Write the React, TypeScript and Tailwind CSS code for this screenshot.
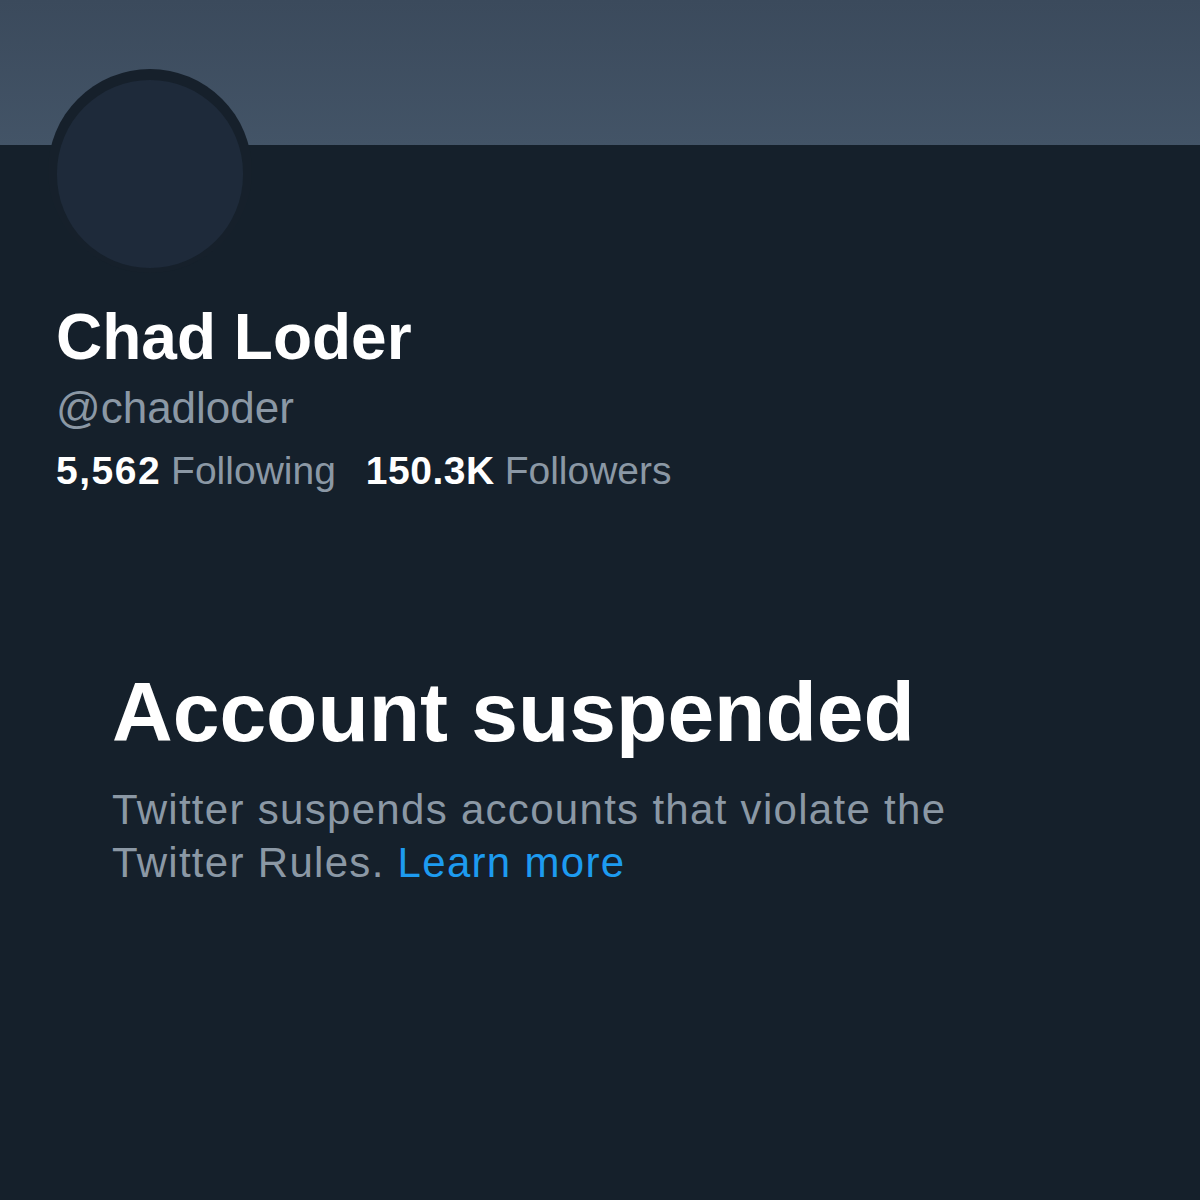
import React from 'react';

const font = { fontFamily: '"Liberation Sans", Arial, sans-serif' };

export default function App() {
  return (
    <div className="w-[1200px] h-[1200px] bg-[#15202b] overflow-hidden" style={font}>
      {/* banner */}
      <div className="h-[145px] bg-gradient-to-b from-[#3b4a5c] to-[#435467]" />

      {/* profile header */}
      <div className="pl-[48px]">
        <div className="-mt-[76px] w-[204px] h-[204px] rounded-full bg-[#16202b] pt-[11px] px-[9px] pb-[5px] relative">
          <div className="w-full h-full rounded-full bg-[#1e2a3a]" />
        </div>
      </div>

      <div className="pl-[56px] mt-[32px]">
        <h1 className="text-[64px] leading-none font-bold text-white">Chad Loder</h1>
        <p className="mt-[17px] text-[44px] leading-none text-[#8b98a5]">@chadloder</p>
        <div className="mt-[21px] flex items-baseline text-[39px] leading-none">
          <span className="font-bold text-white tracking-[1.5px]">5,562</span>
          <span className="ml-[10px] text-[#8b98a5]">Following</span>
          <span className="ml-[30px] font-bold text-white tracking-[0.5px]">150.3K</span>
          <span className="ml-[10px] text-[#8b98a5]">Followers</span>
        </div>
      </div>

      {/* suspended notice */}
      <div className="pl-[112px] mt-[180px]">
        <h2 className="text-[84px] leading-none font-bold text-white">Account suspended</h2>
        <p className="mt-[29px] text-[42px] leading-[53px] text-[#8b98a5] tracking-[1.3px]">
          Twitter suspends accounts that violate the
          <br />
          Twitter Rules. <span className="text-[#1d9bf0]">Learn more</span>
        </p>
      </div>
    </div>
  );
}
